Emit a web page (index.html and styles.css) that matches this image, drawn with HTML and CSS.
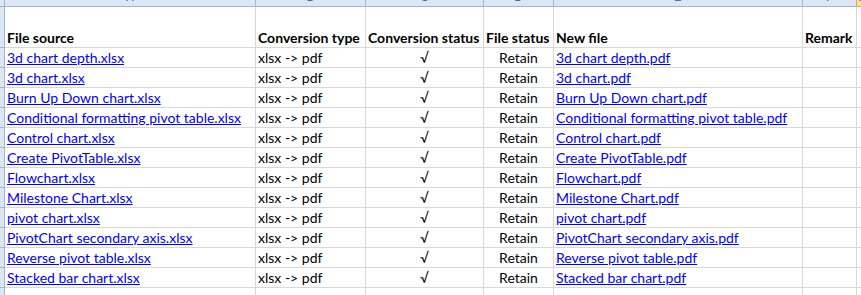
FILE: index.html
```html
<!DOCTYPE html>
<html>
<head>
<meta charset="utf-8">
<link rel="stylesheet" href="styles.css">
</head>
<body>
<div class="sheet">
  <div class="corner"></div>
  <div class="colhdr"><span>A</span></div>
  <div class="colhdr"><span>B</span></div>
  <div class="colhdr"><span>C</span></div>
  <div class="colhdr"><span>D</span></div>
  <div class="colhdr"><span>E</span></div>
  <div class="colhdr colhdr-f"><span>F</span></div>
  <div class="colhdr colhdr-active"><span>G</span></div>

  <div class="rowhdr"></div>
  <div class="cell th">File source</div>
  <div class="cell th">Conversion type</div>
  <div class="cell th">Conversion status</div>
  <div class="cell th">File status</div>
  <div class="cell th">New file</div>
  <div class="cell th">Remark</div>
  <div class="cell"></div>

  <div class="rowhdr"></div><div class="cell"><a>3d chart depth.xlsx</a></div><div class="cell">xlsx -&gt; pdf</div><div class="cell center">√</div><div class="cell center">Retain</div><div class="cell"><a>3d chart depth.pdf</a></div><div class="cell"></div><div class="cell"></div>
  <div class="rowhdr"></div><div class="cell"><a>3d chart.xlsx</a></div><div class="cell">xlsx -&gt; pdf</div><div class="cell center">√</div><div class="cell center">Retain</div><div class="cell"><a>3d chart.pdf</a></div><div class="cell"></div><div class="cell"></div>
  <div class="rowhdr"></div><div class="cell"><a>Burn Up Down chart.xlsx</a></div><div class="cell">xlsx -&gt; pdf</div><div class="cell center">√</div><div class="cell center">Retain</div><div class="cell"><a>Burn Up Down chart.pdf</a></div><div class="cell"></div><div class="cell"></div>
  <div class="rowhdr"></div><div class="cell"><a>Conditional formatting pivot table.xlsx</a></div><div class="cell">xlsx -&gt; pdf</div><div class="cell center">√</div><div class="cell center">Retain</div><div class="cell"><a>Conditional formatting pivot table.pdf</a></div><div class="cell"></div><div class="cell"></div>
  <div class="rowhdr"></div><div class="cell"><a>Control chart.xlsx</a></div><div class="cell">xlsx -&gt; pdf</div><div class="cell center">√</div><div class="cell center">Retain</div><div class="cell"><a>Control chart.pdf</a></div><div class="cell"></div><div class="cell"></div>
  <div class="rowhdr"></div><div class="cell"><a>Create PivotTable.xlsx</a></div><div class="cell">xlsx -&gt; pdf</div><div class="cell center">√</div><div class="cell center">Retain</div><div class="cell"><a>Create PivotTable.pdf</a></div><div class="cell"></div><div class="cell"></div>
  <div class="rowhdr"></div><div class="cell"><a>Flowchart.xlsx</a></div><div class="cell">xlsx -&gt; pdf</div><div class="cell center">√</div><div class="cell center">Retain</div><div class="cell"><a>Flowchart.pdf</a></div><div class="cell"></div><div class="cell"></div>
  <div class="rowhdr"></div><div class="cell"><a>Milestone Chart.xlsx</a></div><div class="cell">xlsx -&gt; pdf</div><div class="cell center">√</div><div class="cell center">Retain</div><div class="cell"><a>Milestone Chart.pdf</a></div><div class="cell"></div><div class="cell"></div>
  <div class="rowhdr"></div><div class="cell"><a>pivot chart.xlsx</a></div><div class="cell">xlsx -&gt; pdf</div><div class="cell center">√</div><div class="cell center">Retain</div><div class="cell"><a>pivot chart.pdf</a></div><div class="cell"></div><div class="cell"></div>
  <div class="rowhdr"></div><div class="cell"><a>PivotChart secondary axis.xlsx</a></div><div class="cell">xlsx -&gt; pdf</div><div class="cell center">√</div><div class="cell center">Retain</div><div class="cell"><a>PivotChart secondary axis.pdf</a></div><div class="cell"></div><div class="cell"></div>
  <div class="rowhdr"></div><div class="cell"><a>Reverse pivot table.xlsx</a></div><div class="cell">xlsx -&gt; pdf</div><div class="cell center">√</div><div class="cell center">Retain</div><div class="cell"><a>Reverse pivot table.pdf</a></div><div class="cell"></div><div class="cell"></div>
  <div class="rowhdr"></div><div class="cell"><a>Stacked bar chart.xlsx</a></div><div class="cell">xlsx -&gt; pdf</div><div class="cell center">√</div><div class="cell center">Retain</div><div class="cell"><a>Stacked bar chart.pdf</a></div><div class="cell"></div><div class="cell"></div>

  <div class="rowhdr"></div><div class="cell"></div><div class="cell"></div><div class="cell"></div><div class="cell"></div><div class="cell"></div><div class="cell"></div><div class="cell"></div>
</div>
</body>
</html>
```
FILE: styles.css
```css
html, body {
  margin: 0;
  padding: 0;
  background: #ffffff;
  overflow: hidden;
}

.sheet {
  display: grid;
  grid-template-columns: 5px 251px 110px 118px 70px 249px 54px 1fr;
  grid-template-rows: 7px 41px;
  grid-auto-rows: 20px;
  width: 861px;
  font-family: "Lato", "Liberation Sans", sans-serif;
  font-size: 14px;
  color: #000000;
}

.corner,
.colhdr {
  box-sizing: border-box;
  background: #dce6f4;
  border-right: 1px solid #9eb6ce;
  border-bottom: 1px solid #9eb6ce;
  overflow: hidden;
  text-align: center;
}

.colhdr span {
  display: block;
  margin-top: -8px;
  font-family: "Liberation Sans", sans-serif;
  font-size: 11px;
  line-height: 11px;
  color: #3d5a80;
}

.colhdr-f {
  border-right-color: #f2a33a;
}

.colhdr-active {
  background: #fbe29c;
  border-bottom-color: #f2a33a;
}

.rowhdr {
  box-sizing: border-box;
  background: #dce6f4;
  border-right: 1px solid #9eb6ce;
  border-bottom: 1px solid #9eb6ce;
}

.cell {
  box-sizing: border-box;
  border-right: 1px solid #d8d8d8;
  border-bottom: 1px solid #d8d8d8;
  display: flex;
  align-items: flex-end;
  padding: 0 2px 1px 2px;
  white-space: nowrap;
  overflow: visible;
  line-height: 17px;
}

.th {
  font-weight: bold;
  padding-bottom: 1px;
}

.center {
  justify-content: center;
}

.cell a {
  color: #0000ff;
  text-decoration: underline;
}
```
